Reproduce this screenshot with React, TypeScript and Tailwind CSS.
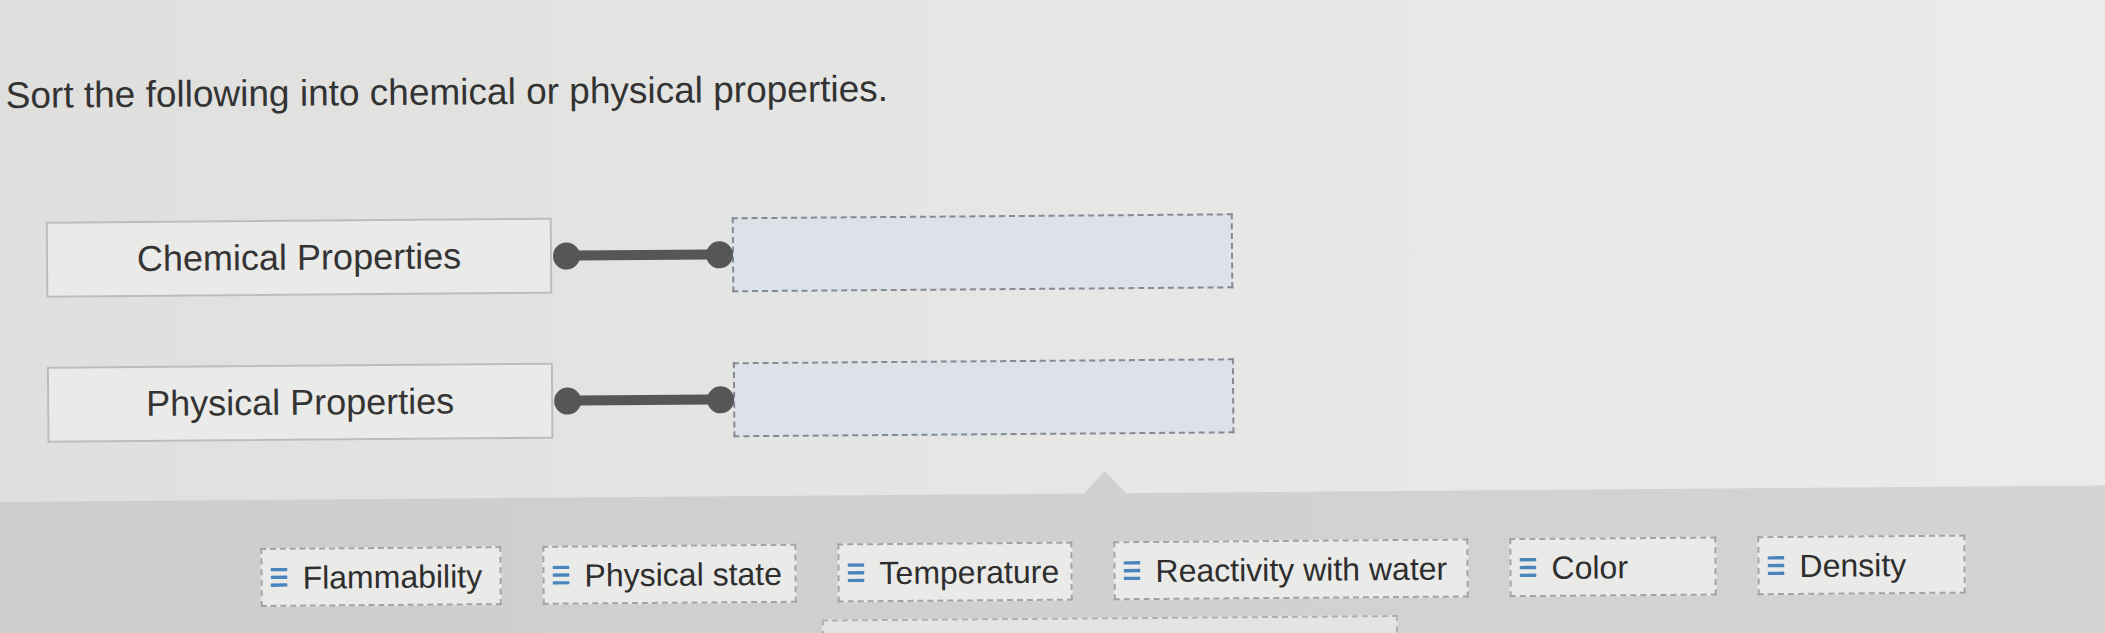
import React from 'react';

const rows = ['Chemical Properties', 'Physical Properties'];

const chips = [
  { label: 'Flammability', w: 'w-[241px]' },
  { label: 'Physical state', w: 'w-[254px]' },
  { label: 'Temperature', w: 'w-[235px]' },
  { label: 'Reactivity with water', w: 'w-[355px]' },
  { label: 'Color', w: 'w-[207px]' },
  { label: 'Density', w: 'w-[208px]' },
];

const Grip = () => (
  <svg width="17" height="19" viewBox="0 0 17 19" className="shrink-0">
    <rect x="0" y="0" width="17" height="3.4" rx="1" fill="#4a84bc" />
    <rect x="0" y="7.8" width="17" height="3.4" rx="1" fill="#4a84bc" />
    <rect x="0" y="15.6" width="17" height="3.4" rx="1" fill="#4a84bc" />
  </svg>
);

const Connector = () => (
  <div className="relative z-10 ml-[1px] flex w-[180px] items-center">
    <div className="h-[27px] w-[27px] shrink-0 rounded-full bg-[#555655]" />
    <div className="-mx-[4px] h-[10px] flex-1 bg-[#555655]" />
    <div className="h-[27px] w-[27px] shrink-0 rounded-full bg-[#555655]" />
  </div>
);

export default function App() {
  return (
    <div
      className="h-[633px] w-full overflow-hidden bg-gradient-to-r from-[#dfdfdd] via-[#e6e6e4] to-[#ebebea] text-[#343434]"
      style={{ fontFamily: '"Liberation Sans", Arial, sans-serif' }}
    >
      <div className="w-[2200px] origin-top-left -rotate-[0.45deg]">
        <h1 className="pl-[5px] pt-[74px] text-[37px] font-normal leading-[44px] text-[#333333]">
          Sort the following into chemical or physical properties.
        </h1>

        <div className="mt-[104px] flex flex-col gap-[69px] pl-[44px]">
          {rows.map((r) => (
            <div key={r} className="flex items-center">
              <div className="flex h-[76px] w-[506px] shrink-0 items-center justify-center border-2 border-[#bcbcba] bg-[#eaeae8] text-[36px] leading-none">
                {r}
              </div>
              <Connector />
              <div className="-ml-[1px] h-[75px] w-[501px] shrink-0 border-2 border-dashed border-[#858b94] bg-[#dde2e8]" />
            </div>
          ))}
        </div>

        <div className="relative -ml-[40px] mt-[59px] h-[220px] w-[2260px] bg-gradient-to-r from-[#cdcdcb] to-[#d4d4d2]">
          <div className="absolute -top-[22px] left-[1120px] h-0 w-0 border-b-[22px] border-l-[21px] border-r-[21px] border-b-[#d0d0ce] border-l-transparent border-r-transparent" />
          <div className="flex items-center gap-[41px] pl-[296px] pt-[48px]">
            {chips.map((c) => (
              <div
                key={c.label}
                className={`${c.w} flex h-[59px] shrink-0 items-center gap-[15px] border-2 border-dashed border-[#a3a3a1] bg-[#eaeae9] pl-[8px] text-[32px] leading-none text-[#2e2e2e]`}
              >
                <Grip />
                <span className="whitespace-nowrap">{c.label}</span>
              </div>
            ))}
          </div>
          <div className="mt-[17px] pl-[857px]">
            <div className="h-[40px] w-[576px] border-2 border-dashed border-[#b0b0ae] bg-[#e4e4e2]" />
          </div>
        </div>
      </div>
    </div>
  );
}
